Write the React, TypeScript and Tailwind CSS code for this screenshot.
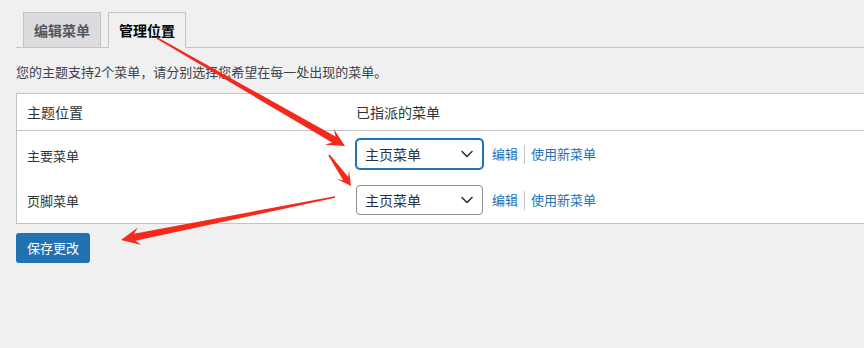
import React from "react";

type Pt = [number, number];

function arrowPoints(t: Pt, p: Pt, hl: number, w1: number, W: number): string {
  const dx = p[0] - t[0];
  const dy = p[1] - t[1];
  const len = Math.sqrt(dx * dx + dy * dy);
  const ux = dx / len;
  const uy = dy / len;
  const nx = -uy;
  const ny = ux;
  const at = (s: number, w: number): Pt => [t[0] + ux * s + nx * w, t[1] + uy * s + ny * w];
  const pts: Pt[] = [
    at(0, 0.8),
    at(len - hl, w1),
    at(len - hl - 5, W),
    p,
    at(len - hl - 5, -W),
    at(len - hl, -w1),
    at(0, -0.8),
  ];
  return pts.map((q) => `${q[0].toFixed(1)},${q[1].toFixed(1)}`).join(" ");
}

function Chevron() {
  return (
    <svg width="12" height="8" viewBox="0 0 12 8" className="shrink-0">
      <path d="M1 1.5 L6 6.5 L11 1.5" fill="none" stroke="#2c3338" strokeWidth="1.6" strokeLinecap="round" strokeLinejoin="round" />
    </svg>
  );
}

function Select({ focused }: { focused?: boolean }) {
  return (
    <div
      className={
        "w-[127px] h-[30px] rounded-[4px] bg-white flex items-center justify-between pl-[8px] pr-[9px] text-[14px] text-[#2c3338] " +
        (focused ? "border border-[#2271b1] shadow-[0_0_0_1px_#2271b1]" : "border border-[#8c8f94]")
      }
    >
      <span>主页菜单</span>
      <Chevron />
    </div>
  );
}

function Links() {
  return (
    <div className="flex items-center ml-[9px] text-[13px] text-[#2271b1]">
      <span>编辑</span>
      <span className="mx-[6px] w-px h-[19px] bg-[#c3c4c7]" />
      <span>使用新菜单</span>
    </div>
  );
}

export default function App() {
  return (
    <div
      className="relative w-[864px] h-[348px] overflow-hidden bg-[#f0f0f1] text-[#3c434a]"
      style={{ fontFamily: '"Noto Sans CJK SC", "Noto Sans", "Liberation Sans", sans-serif' }}
    >
      {/* Tabs */}
      <div className="ml-[16px] pl-[7px] pt-[12px] flex items-end border-b border-[#c3c4c7] h-[48px]">
        <div className="-mb-px h-[36px] px-[10px] flex items-center border border-[#c3c4c7] bg-[#dcdcde] text-[14px] font-semibold text-[#50575e]">
          编辑菜单
        </div>
        <div className="-mb-px ml-[7px] h-[36px] px-[10px] flex items-center border border-[#c3c4c7] border-b-[#f0f0f1] bg-[#f0f0f1] text-[14px] font-semibold text-black">
          管理位置
        </div>
      </div>

      <div className="px-[16px]">
        <p className="mt-[14px] h-[20px] leading-[20px] text-[13px] text-[#3c434a]">
          您的主题支持2个菜单，请分别选择您希望在每一处出现的菜单。
        </p>

        {/* Table */}
        <div className="mt-[11px] -mr-[16px] bg-white border-l border-t border-b border-[#c3c4c7]">
          <div className="h-[37px] flex items-center border-b border-[#c3c4c7] text-[14px] text-[#2c3338]">
            <div className="w-[329px] pl-[10px]">主题位置</div>
            <div className="pl-[10px]">已指派的菜单</div>
          </div>
          <div className="h-[46px] flex items-center text-[13px] text-[#2c3338]">
            <div className="w-[329px] pl-[10px] pt-[3px]">主要菜单</div>
            <div className="pl-[10px] flex items-center">
              <Select focused />
              <Links />
            </div>
          </div>
          <div className="h-[46px] flex items-center text-[13px] text-[#2c3338]">
            <div className="w-[329px] pl-[10px] pt-[2px]">页脚菜单</div>
            <div className="pl-[10px] flex items-center">
              <Select />
              <Links />
            </div>
          </div>
        </div>

        <button className="mt-[9px] w-[74px] h-[30px] rounded-[3px] bg-[#2271b1] text-white text-[13px] flex items-center justify-center">
          保存更改
        </button>
      </div>

      {/* Annotation arrows */}
      <svg className="absolute inset-0 pointer-events-none" width="864" height="348">
        <polygon points={arrowPoints([157, 38], [345, 146], 13, 3.5, 9)} fill="#f5291b" />
        <polygon points={arrowPoints([329, 155], [351, 186], 9, 3, 7.5)} fill="#f5291b" />
        <polygon points={arrowPoints([335, 197], [121, 240], 14, 3.5, 9)} fill="#f5291b" />
      </svg>
    </div>
  );
}
